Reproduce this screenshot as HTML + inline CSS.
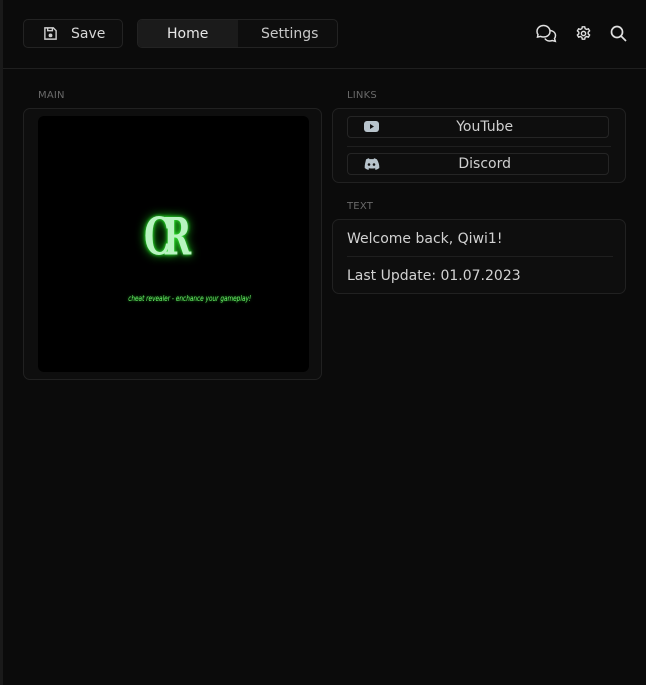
<!DOCTYPE html>
<html><head><style>
*{box-sizing:border-box;margin:0;padding:0}
body{width:646px;height:685px;background:#0b0b0b;font-family:"DejaVu Sans","Liberation Sans",sans-serif;color:#d6d6d6;position:relative;overflow:hidden}
.edge{position:absolute;left:0;top:0;width:3px;height:685px;background:#1a1a1a}
.hdr{position:absolute;left:3px;top:0;width:643px;height:69px;border-bottom:1px solid #1f1f1f}
.btn{position:absolute;border:1px solid #232323;border-radius:5px;background:#0e0e0e;font-size:14px}
.lbl{position:absolute;font-size:10px;color:#6a6a6a;letter-spacing:.2px}
.card{position:absolute;border:1px solid #212121;border-radius:7px;background:#0e0e0e}
.lnk{position:absolute;left:14px;width:262px;height:22px;border:1px solid #252525;border-radius:4px;font-size:14px;text-align:center;line-height:21px;color:#cfcfcf}
.txt{position:absolute;left:14px;font-size:14px;color:#d2d2d2}
</style></head><body>
<div class="edge"></div>
<div class="hdr"></div>
<div class="btn" style="left:23px;top:19px;width:100px;height:29px">
<svg style="position:absolute;left:19px;top:6px" width="15" height="15" viewBox="0 0 16 16" fill="none" stroke="#cfcfcf" stroke-width="1.5"><path d="M2 2h9l3 3v9H2z"/><path d="M5 2v3h5V2"/><circle cx="8" cy="10" r="1.3" fill="#cfcfcf"/></svg>
<span style="position:absolute;left:47px;top:6px">Save</span></div>
<div class="btn" style="left:137px;top:19px;width:201px;height:29px;overflow:hidden">
<div style="position:absolute;left:0;top:0;width:100px;height:27px;background:#1b1b1b"></div>
<span style="position:absolute;left:29px;top:6px;color:#e8e8e8">Home</span>
<span style="position:absolute;left:123px;top:6px;color:#c8c8c8">Settings</span></div>
<svg style="position:absolute;left:536px;top:24px" width="21" height="19" viewBox="0 0 21 19" fill="none" stroke="#e0e0e0" stroke-width="1.5"><path d="M2 10.5C1.2 9.5 1 8.5 1 7.5 1 4 4 1.5 7.5 1.5S14 4 14 7.5 11 13 7.5 13c-1 0-2-.2-2.8-.6L1.5 13z"/><path d="M14.5 6.5c3 .5 5 2.5 5 5 0 1-.3 2-1 3l.8 2.8-3-.8c-1 .4-2 .6-3 .5-2-.1-3.6-1.2-4.5-2.5"/></svg>
<svg style="position:absolute;left:575px;top:25px" width="17" height="17" viewBox="0 0 24 24" fill="none" stroke="#e0e0e0" stroke-width="2"><circle cx="12" cy="12" r="3"/><path d="M10.3 2.5h3.4l.6 2.6 2 1.1 2.6-.8 1.7 2.9-2 1.8v2.3l2 1.8-1.7 2.9-2.6-.8-2 1.1-.6 2.6h-3.4l-.6-2.6-2-1.1-2.6.8-1.7-2.9 2-1.8v-2.3l-2-1.8 1.7-2.9 2.6.8 2-1.1z"/></svg>
<svg style="position:absolute;left:610px;top:25px" width="17" height="17" viewBox="0 0 17 17" fill="none" stroke="#e0e0e0" stroke-width="1.7"><circle cx="7" cy="7" r="5.5"/><path d="M11 11l5 5"/></svg>

<div class="lbl" style="left:38px;top:90px">MAIN</div>
<div class="card" style="left:23px;top:108px;width:299px;height:272px">
<div style="position:absolute;left:14px;top:7px;width:271px;height:256px;background:#000;border-radius:6px">
<div style="position:absolute;left:106px;top:92px;font-family:'DejaVu Serif',serif;font-weight:bold;font-size:34px;color:#b8f4c0;text-shadow:0 0 3px #3f3,0 0 8px #2d2;letter-spacing:-8px;transform:scaleY(1.5);transform-origin:top left">CR</div>
<div style="position:absolute;left:72px;width:130px;top:178px;text-align:center;font-size:8px;color:#6e6;font-style:italic;white-space:nowrap;transform:scaleX(0.72);transform-origin:center;text-shadow:0 0 3px #2a2">cheat revealer - enchance your gameplay!</div>
</div></div>

<div class="lbl" style="left:347px;top:90px">LINKS</div>
<div class="card" style="left:332px;top:108px;width:294px;height:75px">
<div class="lnk" style="top:7px">&nbsp;&nbsp;&nbsp;YouTube</div>
<svg style="position:absolute;left:31px;top:12px" width="15" height="11" viewBox="0 0 15 11"><rect width="15" height="11" rx="3" fill="#b8c4cc"/><path d="M6 3l4 2.5L6 8z" fill="#111"/></svg>
<div style="position:absolute;left:14px;top:37px;width:264px;height:1px;background:#1f1f1f"></div>
<div class="lnk" style="top:44px">&nbsp;&nbsp;&nbsp;Discord</div>
<svg style="position:absolute;left:30px;top:49px" width="17" height="12" viewBox="0 0 17 12"><path d="M3 1.5C4.5.6 6 .3 6 .3l.4.8h4.2l.4-.8s1.5.3 3 1.2C15.5 4 16.5 7 16.3 10c-1.2 1-2.6 1.6-3.8 1.8l-.8-1.2c.7-.3 1.300-.6 1.8-1-2.3 1.2-6.7 1.2-9 0 .5.4 1.1.7 1.8 1l-.8 1.2C4.3 11.6 2.9 11 1.7 10 1.500 7 2.500 4 3 1.500z" fill="#b8c4cc"/><circle cx="6" cy="6.5" r="1.3" fill="#111"/><circle cx="11" cy="6.5" r="1.3" fill="#111"/></svg>
</div>

<div class="lbl" style="left:347px;top:201px">TEXT</div>
<div class="card" style="left:332px;top:219px;width:294px;height:75px">
<div class="txt" style="top:11px">Welcome back, Qiwi1!</div>
<div style="position:absolute;left:14px;top:36px;width:266px;height:1px;background:#1f1f1f"></div>
<div class="txt" style="top:48px">Last Update: 01.07.2023</div>
</div>
</body></html>
